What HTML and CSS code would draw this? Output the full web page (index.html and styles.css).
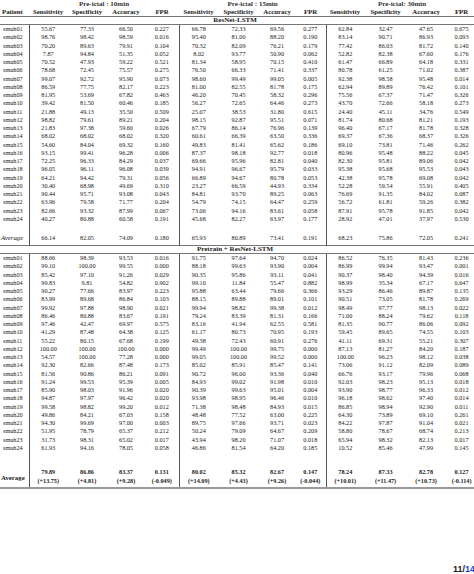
FILE: index.html
```html
<!DOCTYPE html>
<html>
<head>
<meta charset="utf-8">
<link rel="stylesheet" href="styles.css">
</head>
<body>
<div class="wrap">
<table class="res">
<colgroup>
<col style="width:29px"><col style="width:38px"><col style="width:40px"><col style="width:38px"><col style="width:34px"><col style="width:39px"><col style="width:41px"><col style="width:36px"><col style="width:31px"><col style="width:38px"><col style="width:43px"><col style="width:38px"><col style="width:33px">
</colgroup>
<thead>
<tr class="grp"><th></th><th colspan="4">Pre-ictal : 10min</th><th colspan="4">Pre-ictal : 15min</th><th colspan="4">Pre-ictal: 30min</th></tr>
<tr class="cols"><th class="pat">Patient</th><th>Sensitivity</th><th>Specificity</th><th>Accuracy</th><th>FPR</th><th>Sensitivity</th><th>Specificity</th><th>Accuracy</th><th>FPR</th><th>Sensitivity</th><th>Specificity</th><th>Accuracy</th><th>FPR</th></tr>
</thead>
<tbody>
<tr class="sec"><td colspan="13">ResNet-LSTM</td></tr>
<tr class="data"><td>smuh01</td><td>55.67</td><td>77.33</td><td>66.50</td><td>0.227</td><td>66.78</td><td>72.33</td><td>69.56</td><td>0.277</td><td>62.84</td><td>32.47</td><td>47.65</td><td>0.675</td></tr>
<tr class="data"><td>smuh02</td><td>98.76</td><td>98.42</td><td>98.59</td><td>0.016</td><td>95.40</td><td>81.00</td><td>88.20</td><td>0.190</td><td>83.14</td><td>90.71</td><td>86.93</td><td>0.093</td></tr>
<tr class="data"><td>smuh03</td><td>70.20</td><td>89.63</td><td>79.91</td><td>0.104</td><td>70.32</td><td>82.09</td><td>76.21</td><td>0.179</td><td>77.42</td><td>86.03</td><td>81.72</td><td>0.140</td></tr>
<tr class="data"><td>smuh04</td><td>7.87</td><td>94.84</td><td>51.35</td><td>0.052</td><td>8.02</td><td>93.77</td><td>50.90</td><td>0.062</td><td>52.82</td><td>82.38</td><td>67.60</td><td>0.176</td></tr>
<tr class="data"><td>smuh05</td><td>70.52</td><td>47.93</td><td>59.22</td><td>0.521</td><td>81.34</td><td>58.95</td><td>70.15</td><td>0.410</td><td>61.47</td><td>66.89</td><td>64.18</td><td>0.331</td></tr>
<tr class="data"><td>smuh06</td><td>78.68</td><td>72.45</td><td>75.57</td><td>0.275</td><td>76.50</td><td>66.33</td><td>71.41</td><td>0.337</td><td>80.78</td><td>61.25</td><td>71.02</td><td>0.387</td></tr>
<tr class="data"><td>smuh07</td><td>99.07</td><td>92.72</td><td>95.90</td><td>0.073</td><td>98.60</td><td>99.49</td><td>99.05</td><td>0.005</td><td>92.38</td><td>98.58</td><td>95.48</td><td>0.014</td></tr>
<tr class="data"><td>smuh08</td><td>86.59</td><td>77.75</td><td>82.17</td><td>0.223</td><td>81.00</td><td>82.55</td><td>81.78</td><td>0.175</td><td>62.94</td><td>89.89</td><td>76.42</td><td>0.101</td></tr>
<tr class="data"><td>smuh09</td><td>81.95</td><td>53.69</td><td>67.82</td><td>0.463</td><td>46.20</td><td>70.45</td><td>58.32</td><td>0.296</td><td>75.56</td><td>67.37</td><td>71.47</td><td>0.326</td></tr>
<tr class="data"><td>smuh10</td><td>39.42</td><td>81.50</td><td>60.46</td><td>0.185</td><td>56.27</td><td>72.65</td><td>64.46</td><td>0.273</td><td>43.70</td><td>72.66</td><td>58.18</td><td>0.273</td></tr>
<tr class="data"><td>smuh11</td><td>21.88</td><td>49.13</td><td>35.50</td><td>0.509</td><td>25.07</td><td>38.53</td><td>31.80</td><td>0.615</td><td>24.40</td><td>45.11</td><td>34.76</td><td>0.549</td></tr>
<tr class="data"><td>smuh12</td><td>98.82</td><td>79.61</td><td>89.21</td><td>0.204</td><td>98.15</td><td>92.87</td><td>95.51</td><td>0.071</td><td>81.74</td><td>80.68</td><td>81.21</td><td>0.193</td></tr>
<tr class="data"><td>smuh13</td><td>21.83</td><td>97.38</td><td>59.60</td><td>0.026</td><td>67.79</td><td>86.14</td><td>76.96</td><td>0.139</td><td>96.40</td><td>67.17</td><td>81.78</td><td>0.328</td></tr>
<tr class="data"><td>smuh14</td><td>68.02</td><td>68.02</td><td>68.02</td><td>0.320</td><td>60.61</td><td>66.39</td><td>63.50</td><td>0.336</td><td>69.37</td><td>67.36</td><td>68.37</td><td>0.326</td></tr>
<tr class="data"><td>smuh15</td><td>54.60</td><td>84.04</td><td>69.32</td><td>0.160</td><td>49.83</td><td>81.41</td><td>65.62</td><td>0.186</td><td>69.10</td><td>73.81</td><td>71.46</td><td>0.262</td></tr>
<tr class="data"><td>smuh16</td><td>93.15</td><td>99.41</td><td>96.28</td><td>0.006</td><td>87.37</td><td>98.18</td><td>92.77</td><td>0.018</td><td>80.96</td><td>95.48</td><td>88.22</td><td>0.045</td></tr>
<tr class="data"><td>smuh17</td><td>72.25</td><td>96.33</td><td>84.29</td><td>0.037</td><td>69.66</td><td>95.96</td><td>82.81</td><td>0.040</td><td>82.30</td><td>95.81</td><td>89.06</td><td>0.042</td></tr>
<tr class="data"><td>smuh18</td><td>96.05</td><td>96.11</td><td>96.08</td><td>0.039</td><td>94.91</td><td>96.67</td><td>95.79</td><td>0.033</td><td>95.38</td><td>95.68</td><td>95.53</td><td>0.043</td></tr>
<tr class="data"><td>smuh19</td><td>64.21</td><td>94.42</td><td>79.31</td><td>0.056</td><td>66.89</td><td>94.67</td><td>80.78</td><td>0.053</td><td>42.38</td><td>95.78</td><td>69.08</td><td>0.042</td></tr>
<tr class="data"><td>smuh20</td><td>30.40</td><td>68.98</td><td>49.69</td><td>0.310</td><td>23.27</td><td>66.59</td><td>44.93</td><td>0.334</td><td>52.28</td><td>59.54</td><td>55.91</td><td>0.405</td></tr>
<tr class="data"><td>smuh21</td><td>90.44</td><td>95.71</td><td>93.08</td><td>0.043</td><td>84.81</td><td>93.70</td><td>89.25</td><td>0.063</td><td>76.69</td><td>91.35</td><td>84.02</td><td>0.087</td></tr>
<tr class="data"><td>smuh22</td><td>63.96</td><td>79.58</td><td>71.77</td><td>0.204</td><td>54.79</td><td>74.15</td><td>64.47</td><td>0.259</td><td>56.72</td><td>61.81</td><td>59.26</td><td>0.382</td></tr>
<tr class="data"><td>smuh23</td><td>82.66</td><td>93.32</td><td>87.99</td><td>0.067</td><td>73.06</td><td>94.16</td><td>83.61</td><td>0.058</td><td>87.91</td><td>95.78</td><td>91.85</td><td>0.042</td></tr>
<tr class="data"><td>smuh24</td><td>40.27</td><td>80.88</td><td>60.58</td><td>0.191</td><td>45.68</td><td>82.27</td><td>63.97</td><td>0.177</td><td>28.92</td><td>47.01</td><td>37.97</td><td>0.530</td></tr>
<tr class="data sp"><td></td><td></td><td></td><td></td><td></td><td></td><td></td><td></td><td></td><td></td><td></td><td></td><td></td></tr>
<tr class="data avg1"><td>Average</td><td>66.14</td><td>82.05</td><td>74.09</td><td>0.180</td><td>65.93</td><td>80.89</td><td>73.41</td><td>0.191</td><td>68.23</td><td>75.86</td><td>72.05</td><td>0.241</td></tr>
<tr class="sec"><td colspan="13">Pretrain + ResNet-LSTM</td></tr>
<tr class="data"><td>smuh01</td><td>88.66</td><td>98.39</td><td>93.53</td><td>0.016</td><td>91.75</td><td>97.64</td><td>94.70</td><td>0.024</td><td>86.52</td><td>76.35</td><td>81.43</td><td>0.236</td></tr>
<tr class="data"><td>smuh02</td><td>99.10</td><td>100.00</td><td>99.55</td><td>0.000</td><td>88.18</td><td>99.63</td><td>93.90</td><td>0.004</td><td>86.99</td><td>99.94</td><td>93.47</td><td>0.001</td></tr>
<tr class="data"><td>smuh03</td><td>85.42</td><td>97.10</td><td>91.26</td><td>0.029</td><td>90.35</td><td>95.86</td><td>93.11</td><td>0.041</td><td>90.37</td><td>98.40</td><td>94.39</td><td>0.016</td></tr>
<tr class="data"><td>smuh04</td><td>99.83</td><td>9.81</td><td>54.82</td><td>0.902</td><td>99.10</td><td>11.84</td><td>55.47</td><td>0.882</td><td>98.99</td><td>35.34</td><td>67.17</td><td>0.647</td></tr>
<tr class="data"><td>smuh05</td><td>90.27</td><td>77.66</td><td>83.97</td><td>0.223</td><td>95.88</td><td>63.44</td><td>79.66</td><td>0.366</td><td>93.29</td><td>86.46</td><td>89.87</td><td>0.135</td></tr>
<tr class="data"><td>smuh06</td><td>83.99</td><td>89.68</td><td>86.84</td><td>0.103</td><td>88.15</td><td>89.88</td><td>89.01</td><td>0.101</td><td>90.51</td><td>73.05</td><td>81.78</td><td>0.269</td></tr>
<tr class="data"><td>smuh07</td><td>99.92</td><td>97.88</td><td>98.90</td><td>0.021</td><td>99.94</td><td>98.82</td><td>99.38</td><td>0.012</td><td>98.49</td><td>97.77</td><td>98.13</td><td>0.022</td></tr>
<tr class="data"><td>smuh08</td><td>86.46</td><td>80.88</td><td>83.67</td><td>0.191</td><td>79.24</td><td>83.39</td><td>81.31</td><td>0.166</td><td>71.00</td><td>88.24</td><td>79.62</td><td>0.118</td></tr>
<tr class="data"><td>smuh09</td><td>97.46</td><td>42.47</td><td>69.97</td><td>0.575</td><td>83.16</td><td>41.94</td><td>62.55</td><td>0.581</td><td>81.35</td><td>90.77</td><td>86.06</td><td>0.092</td></tr>
<tr class="data"><td>smuh10</td><td>41.29</td><td>87.48</td><td>64.38</td><td>0.125</td><td>61.17</td><td>80.73</td><td>70.95</td><td>0.193</td><td>59.45</td><td>89.65</td><td>74.55</td><td>0.103</td></tr>
<tr class="data"><td>smuh11</td><td>55.22</td><td>80.15</td><td>67.68</td><td>0.199</td><td>49.38</td><td>72.43</td><td>60.91</td><td>0.276</td><td>41.11</td><td>69.31</td><td>55.21</td><td>0.307</td></tr>
<tr class="data"><td>smuh12</td><td>100.00</td><td>100.00</td><td>100.00</td><td>0.000</td><td>99.49</td><td>100.00</td><td>99.75</td><td>0.000</td><td>87.13</td><td>81.27</td><td>84.20</td><td>0.187</td></tr>
<tr class="data"><td>smuh13</td><td>54.57</td><td>100.00</td><td>77.28</td><td>0.000</td><td>99.05</td><td>100.00</td><td>99.52</td><td>0.000</td><td>100.00</td><td>96.23</td><td>98.12</td><td>0.038</td></tr>
<tr class="data"><td>smuh14</td><td>92.30</td><td>82.66</td><td>87.48</td><td>0.173</td><td>85.02</td><td>85.91</td><td>85.47</td><td>0.141</td><td>73.06</td><td>91.12</td><td>82.09</td><td>0.089</td></tr>
<tr class="data"><td>smuh15</td><td>81.56</td><td>90.86</td><td>86.21</td><td>0.091</td><td>90.72</td><td>96.00</td><td>93.36</td><td>0.040</td><td>66.76</td><td>93.17</td><td>79.96</td><td>0.068</td></tr>
<tr class="data"><td>smuh16</td><td>91.24</td><td>99.53</td><td>95.39</td><td>0.005</td><td>84.93</td><td>99.02</td><td>91.98</td><td>0.010</td><td>92.03</td><td>98.23</td><td>95.13</td><td>0.018</td></tr>
<tr class="data"><td>smuh17</td><td>85.90</td><td>98.03</td><td>91.96</td><td>0.020</td><td>90.39</td><td>99.63</td><td>95.01</td><td>0.004</td><td>93.90</td><td>98.77</td><td>96.33</td><td>0.012</td></tr>
<tr class="data"><td>smuh18</td><td>94.87</td><td>97.97</td><td>96.42</td><td>0.020</td><td>93.98</td><td>98.95</td><td>96.46</td><td>0.010</td><td>96.18</td><td>98.62</td><td>97.40</td><td>0.014</td></tr>
<tr class="data"><td>smuh19</td><td>99.58</td><td>98.82</td><td>99.20</td><td>0.012</td><td>71.38</td><td>98.48</td><td>84.93</td><td>0.015</td><td>86.85</td><td>98.94</td><td>92.90</td><td>0.011</td></tr>
<tr class="data"><td>smuh20</td><td>49.86</td><td>84.21</td><td>67.03</td><td>0.158</td><td>48.48</td><td>77.52</td><td>63.00</td><td>0.225</td><td>64.30</td><td>73.89</td><td>69.10</td><td>0.261</td></tr>
<tr class="data"><td>smuh21</td><td>94.30</td><td>99.69</td><td>97.00</td><td>0.003</td><td>89.75</td><td>97.66</td><td>93.71</td><td>0.023</td><td>84.22</td><td>97.87</td><td>91.04</td><td>0.021</td></tr>
<tr class="data"><td>smuh22</td><td>51.95</td><td>78.79</td><td>65.37</td><td>0.212</td><td>50.24</td><td>79.09</td><td>64.67</td><td>0.209</td><td>58.80</td><td>78.67</td><td>68.74</td><td>0.213</td></tr>
<tr class="data"><td>smuh23</td><td>31.73</td><td>98.31</td><td>65.02</td><td>0.017</td><td>43.94</td><td>98.20</td><td>71.07</td><td>0.018</td><td>65.94</td><td>98.32</td><td>82.13</td><td>0.017</td></tr>
<tr class="data"><td>smuh24</td><td>61.93</td><td>94.16</td><td>78.05</td><td>0.058</td><td>46.86</td><td>81.54</td><td>64.20</td><td>0.185</td><td>10.52</td><td>85.46</td><td>47.99</td><td>0.145</td></tr>
<tr class="data sp"><td></td><td></td><td></td><td></td><td></td><td></td><td></td><td></td><td></td><td></td><td></td><td></td><td></td></tr>
<tr class="data avg2"><td>Average</td><td>79.89<br>(+13.75)</td><td>86.86<br>(+4.81)</td><td>83.37<br>(+9.28)</td><td>0.131<br>(-0.049)</td><td>80.02<br>(+14.09)</td><td>85.32<br>(+4.43)</td><td>82.67<br>(+9.26)</td><td>0.147<br>(-0.044)</td><td>78.24<br>(+10.01)</td><td>87.33<br>(+11.47)</td><td>82.78<br>(+10.73)</td><td>0.127<br>(-0.114)</td></tr>
</tbody>
</table>
</div>
<div class="pg"><span class="cur">11/</span><span class="tot">14</span></div>
</body>
</html>
```

FILE: styles.css
```css
html, body {
  margin: 0;
  padding: 0;
  overflow: hidden;
}
body {
  width: 474px;
  height: 574px;
  display: flex;
  flex-direction: column;
  background: #ffffff;
  font-family: "Liberation Serif", "Times New Roman", serif;
  color: #1a1a1a;
}
.wrap {
  width: 474px;
  overflow: hidden;
}
.res {
  border-collapse: collapse;
  table-layout: fixed;
  width: 478px;
}
.res th, .res td {
  padding: 0;
  text-align: center;
  white-space: nowrap;
}
.grp th {
  font-size: 7px;
  line-height: 8px;
  height: 8px;
  font-weight: bold;
  color: #333;
}
.cols th {
  font-size: 6.8px;
  line-height: 8px;
  height: 8px;
  font-weight: bold;
  border-bottom: 1px solid #777;
}
.cols th.pat {
  text-align: left;
  padding-left: 2px;
}
.sec td {
  font-size: 7px;
  line-height: 7px;
  height: 7px;
  font-weight: bold;
  border-top: 1px solid #777;
  border-bottom: 1px solid #777;
  padding-right: 8px;
}
.data td {
  font-size: 6.2px;
  line-height: 8.25px;
  height: 8.25px;
}
.data td:first-child {
  text-align: left;
  padding-left: 3px;
}
.data td:nth-child(1),
.data td:nth-child(5),
.data td:nth-child(9) {
  border-right: 1px solid #555;
}
.sp td {
  height: 7px;
  line-height: 7px;
}
.avg1 td {
  line-height: 8px;
  height: 8px;
  padding-top: 4px;
  padding-bottom: 3px;
}
.avg1 td:first-child {
  font-size: 6.8px;
  font-style: italic;
  padding-left: 1px;
}
.avg2 td {
  font-weight: bold;
  line-height: 9px;
  height: 18px;
  padding-top: 7px;
  padding-bottom: 1px;
  border-bottom: 2px solid #999;
}
.avg2 td:first-child {
  font-size: 6.8px;
  padding-left: 1px;
  padding-top: 9px;
  vertical-align: middle;
}
.pg {
  margin-top: auto;
  align-self: flex-end;
  margin-right: -1px;
  font-family: "Liberation Sans", Arial, sans-serif;
  font-weight: bold;
  font-size: 9px;
  line-height: 10px;
  color: #222;
}
.pg .tot {
  color: #1f3fd0;
}
```
